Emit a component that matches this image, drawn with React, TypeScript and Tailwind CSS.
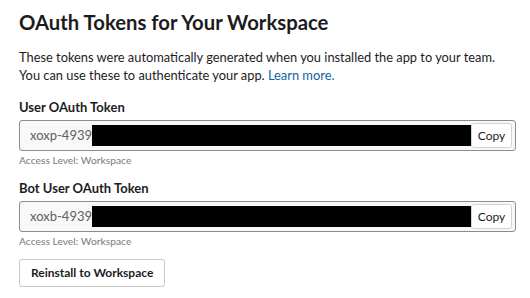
const font = { fontFamily: "Lato, 'Noto Sans', sans-serif" };

function TokenField({ label, prefix }: { label: string; prefix: string }) {
  return (
    <div>
      <div className="text-[13px] font-bold leading-[18px] text-[#1d1c1d]">{label}</div>
      <div className="mt-[4px] flex h-[31px] items-center rounded-[3px] border border-[#8d8d8d] bg-[#f8f8f8] pl-[10px] pr-[3px]">
        <span className="text-[13px] text-[#616061]">{prefix}</span>
        <div className="h-[21px] flex-1 bg-black" />
        <button className="flex h-[25px] w-[41px] items-center justify-center rounded-[3px] border border-[#d4d4d4] bg-white text-[12px] text-[#1d1c1d]">
          Copy
        </button>
      </div>
      <div className="mt-[2px] text-[10.3px] leading-[14px] text-[#7a7a7a]">Access Level: Workspace</div>
    </div>
  );
}

export default function App() {
  return (
    <div className="h-[298px] w-[530px] bg-white pl-[19px] pr-[14px] pt-[10px]" style={font}>
      <h1 className="text-[20.3px] font-bold leading-[24px] text-[#1d1c1d]">OAuth Tokens for Your Workspace</h1>
      <p className="mt-[14px] text-[12.85px] leading-[18px] text-[#1d1c1d]">
        These tokens were automatically generated when you installed the app to your team.
        <br />
        You can use these to authenticate your app. <span className="text-[#1264a3]">Learn more.</span>
      </p>
      <div className="mt-[14px] flex flex-col gap-[12px]">
        <TokenField label="User OAuth Token" prefix="xoxp-4939" />
        <TokenField label="Bot User OAuth Token" prefix="xoxb-4939" />
      </div>
      <button className="mt-[11px] h-[28px] rounded-[3px] border border-[#c8c8c8] bg-white px-[11px] text-[12px] font-bold text-[#1d1c1d]">
        Reinstall to Workspace
      </button>
    </div>
  );
}
